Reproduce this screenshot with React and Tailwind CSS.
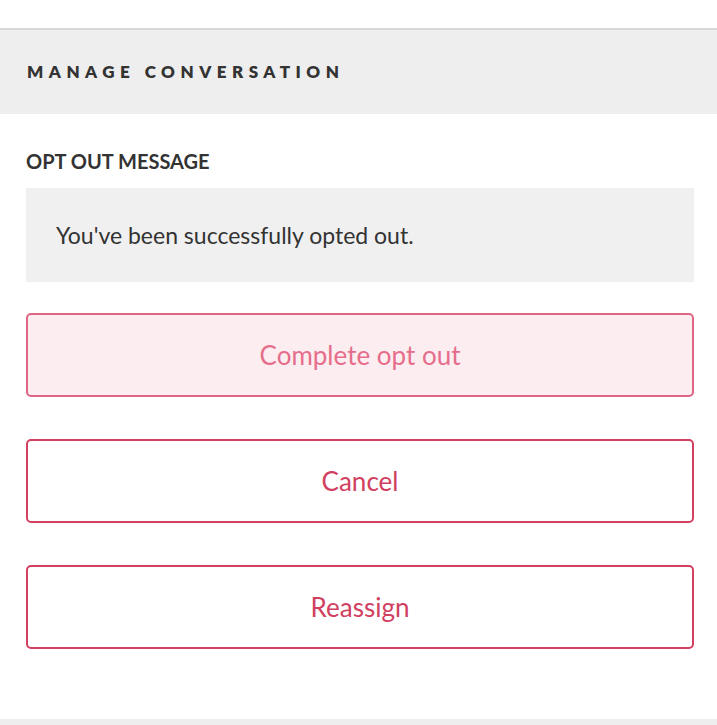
export default function App() {
  const btn =
    "w-full h-[84px] rounded-[5px] border-2 text-[26px] flex items-center justify-center";

  return (
    <div
      className="w-[717px] h-[725px] bg-white flex flex-col"
      style={{ fontFamily: "Lato, 'Noto Sans', sans-serif" }}
    >
      <div className="h-[28px]" />
      <div className="h-[86px] bg-[#eeeeee] border-t-2 border-[#d9d9d9] flex items-center px-[27px]">
        <h1 className="text-[17px] font-extrabold tracking-[5.5px] text-[#333333]">
          MANAGE CONVERSATION
        </h1>
      </div>

      <div className="flex-1 pl-[26px] pr-[23px] pt-[35px]">
        <h2 className="text-[20px] font-bold text-[#333333] leading-[24px]">
          OPT OUT MESSAGE
        </h2>
        <div className="mt-[15px] h-[94px] bg-[#f0f0f0] flex items-center px-[30px] text-[23px] text-[#333333]">
          You've been successfully opted out.
        </div>

        <div className="mt-[31px] flex flex-col gap-[42px]">
          <button
            disabled
            className={`${btn} border-[#de6684] bg-[#fcedf0] text-[#e66d8b]`}
          >
            Complete opt out
          </button>
          <button className={`${btn} border-[#d1405f] bg-white text-[#d1405f]`}>
            Cancel
          </button>
          <button className={`${btn} border-[#d1405f] bg-white text-[#d1405f]`}>
            Reassign
          </button>
        </div>
      </div>

      <div className="h-[6px] bg-[#eeeeee]" />
    </div>
  );
}
